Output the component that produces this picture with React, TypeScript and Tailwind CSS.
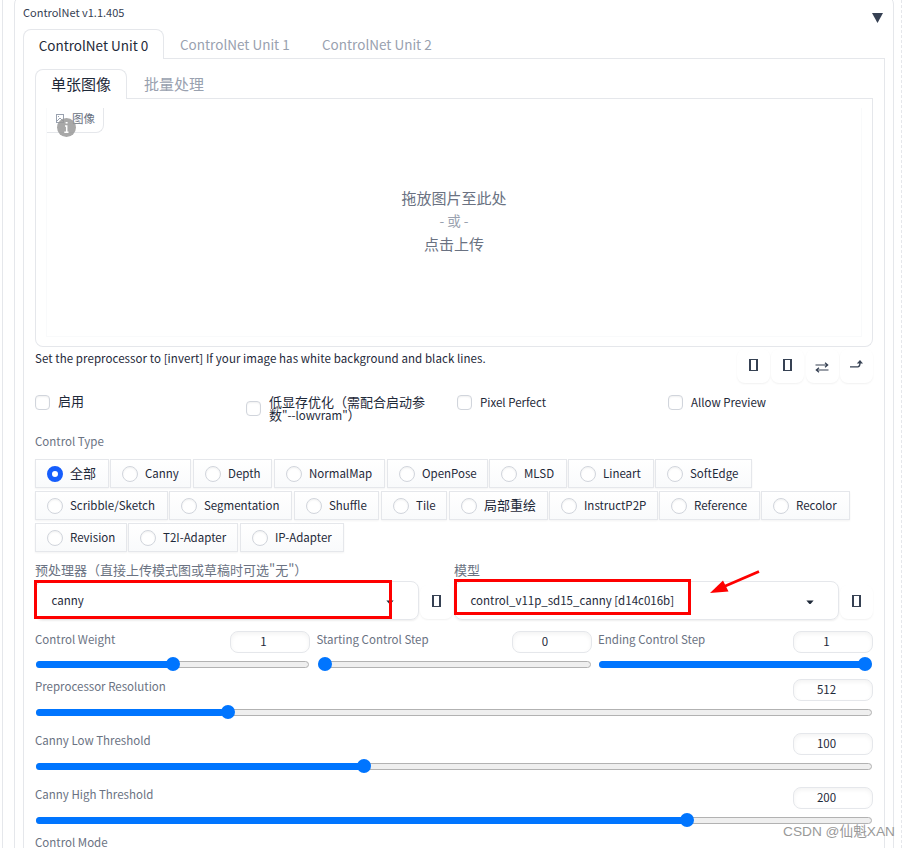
import { useState } from 'react';
import clsx from 'clsx';

const controlTypes = [
  [
    { name: '全部', width: 'w-[74px] mr-px', cjk: true },
    { name: 'Canny', width: 'w-[81px] mr-0.5' },
    { name: 'Depth', width: 'w-[79px] mr-0.5' },
    { name: 'NormalMap', width: 'w-[111px] mr-0.5' },
    { name: 'OpenPose', width: 'w-[101px] mr-px' },
    { name: 'MLSD', width: 'w-[78px] mr-px' },
    { name: 'Lineart', width: 'w-[86px] mr-px' },
    { name: 'SoftEdge', width: 'w-[97px]' },
  ],
  [
    { name: 'Scribble/Sketch', width: 'w-[133px] mr-px' },
    { name: 'Segmentation', width: 'w-[123px] mr-0.5' },
    { name: 'Shuffle', width: 'w-[85px] mr-0.5' },
    { name: 'Tile', width: 'w-[66px] mr-0.5' },
    { name: '局部重绘', width: 'w-[99px] mr-px', cjk: true },
    { name: 'InstructP2P', width: 'w-[109px] mr-px' },
    { name: 'Reference', width: 'w-[101px] mr-px' },
    { name: 'Recolor', width: 'w-[89px]' },
  ],
  [
    { name: 'Revision', width: 'w-[92px] mr-px' },
    { name: 'T2I-Adapter', width: 'w-[110px] mr-0.5' },
    { name: 'IP-Adapter', width: 'w-[104px]' },
  ],
];

const Box = () => <span className="mb-[3px] block h-3 w-[9px] border-x-2 border-y border-gray-700" />;

const ToolButton = ({ children }: { children: React.ReactNode }) => (
  <button className="flex h-[34px] w-[33px] shrink-0 items-center justify-center rounded-lg shadow-[0_1px_2px_rgba(0,0,0,0.06)]">
    {children}
  </button>
);

const CheckBox = ({ label, tall }: { label: React.ReactNode; tall?: boolean }) => (
  <label className="flex w-[211px] shrink-0 items-center">
    <span className="h-[15px] w-[15px] shrink-0 rounded border border-gray-300 bg-white shadow-[inset_0_1px_2px_rgba(0,0,0,0.06)]" />
    <span className={clsx('ml-2 whitespace-nowrap', tall ? 'text-[13px] leading-[13px]' : 'leading-[15px]')}>{label}</span>
  </label>
);

const NumberBox = ({ value }: { value: number }) => (
  <div className="flex h-[22px] w-20 shrink-0 items-center justify-center rounded-lg border border-gray-200 pr-[13px] shadow-[inset_0_2px_4px_rgba(0,0,0,0.05)]">
    {value}
  </div>
);

const Track = ({ percent }: { percent: number }) => (
  <div className="relative mx-px h-[7px] rounded-full border border-[#b2b2b2] bg-[#efefef]">
    <div className="absolute -top-px -left-px h-[7px] rounded-full bg-[#0075ff]" style={{ width: `${percent}%` }} />
    <div
      className="absolute -top-[5px] h-3.5 w-3.5 rounded-full bg-[#0075ff]"
      style={{ left: `calc(${percent} * (100% - 12px) / 100 - 1px)` }}
    />
  </div>
);

const Slider = ({ label, value, percent, short }: { label: string; value: number; percent: number; short?: boolean }) => (
  <div className={short ? 'w-[275px]' : 'h-[54px]'}>
    <div className="flex items-start justify-between">
      <span className="leading-[18px] text-gray-500">{label}</span>
      <div className={short ? 'pt-px' : 'pt-0.5'}><NumberBox value={value} /></div>
    </div>
    <div className={short ? 'pt-2' : 'pt-[7.5px]'}>
      <Track percent={percent} />
    </div>
  </div>
);

const Dropdown = ({ value, children }: { value: string; children?: React.ReactNode }) => (
  <div className="relative flex h-[39px] items-center justify-between rounded-lg border border-gray-200 pl-[15.5px] pr-6 shadow-[0_1px_2px_rgba(0,0,0,0.07)]">
    <span>{value}</span>
    <svg width="8" height="5" viewBox="0 0 8 5" className="mt-[3px] text-gray-800">
      <path d="M0.4 0.5h7.2L5 3.6Q4 4.6 3 3.6Z" fill="currentColor" />
    </svg>
    {children}
  </div>
);

const App = () => {
  const [controlType, setControlType] = useState('全部');

  return (
    <div
      lang="zh-CN"
      className="relative h-[848px] w-[908px] overflow-hidden bg-white font-['Noto_Sans_CJK_SC',sans-serif] text-[11.5px] text-gray-800"
    >
      <div className="ml-0.5 flex h-full w-[900px] border-x border-l-gray-200 border-r-transparent">
        <div className="-mt-1 ml-[11px] h-[870px] w-[880px] shrink-0 rounded-lg border border-gray-200 px-2 pt-1">
          <div className="flex h-7 items-center justify-between pr-0.5 pb-1 text-gray-700">
            <span className="pb-0.5 text-[11px]">ControlNet v1.1.405</span>
            <svg width="11" height="10" viewBox="0 0 11 10" className="mt-2.5 fill-gray-700">
              <path d="M0 0h11L5.5 10z" />
            </svg>
          </div>

          {/* Unit tabs */}
          <div className="flex h-[30px] text-[13.5px]">
            <button className="w-[141px] rounded-t-lg border border-b-0 border-gray-200 pt-px">ControlNet Unit 0</button>
            <div className="flex flex-1 border-b border-gray-200 pl-4 pt-0.5 text-gray-400">
              <button className="w-[142px] text-left">ControlNet Unit 1</button>
              <button>ControlNet Unit 2</button>
            </div>
          </div>

          <div className="h-[800px] border-x border-gray-200 px-[11px] pt-2.5">
            {/* Image source tabs */}
            <div className="flex h-[30px] text-[15px]">
              <button className="w-[92px] rounded-t-lg border border-b-0 border-gray-200">单张图像</button>
              <div className="flex flex-1 border-b border-gray-200 pl-[17px] pt-0.5 text-gray-400">
                <button>批量处理</button>
              </div>
            </div>
            <div className="h-[248px] rounded-b-lg border border-t-0 border-gray-200 px-2.5 pt-[9px]">
              <div className="relative flex h-[229px] flex-col items-center justify-center border border-t-0 border-gray-50 pb-1 text-[15px] leading-[23px] text-gray-500">
                <div className="absolute left-0 top-0 flex h-[25px] w-[57px] items-center rounded-br-lg border-b border-r border-gray-200 pb-[3px] pl-[9px] text-[11.5px]">
                  <svg width="8" height="9" viewBox="0 0 8 9" className="mr-2 fill-none stroke-gray-400">
                    <rect x="0.5" y="0.5" width="7" height="8" />
                    <path d="M1 7l3-3 3 3M2 2.5h1" />
                  </svg>
                  图像
                </div>
                <svg width="19" height="19" viewBox="0 0 19 19" className="absolute left-[9.5px] top-2.5">
                  <circle cx="9.5" cy="9.5" r="9.5" fill="#999" fillOpacity="0.85" />
                  <path d="M8 8h1.7v6M7.3 14.2h4.2M8.6 4.8h2" stroke="#fff" strokeWidth="1.5" fill="none" />
                </svg>
                <span>拖放图片至此处</span>
                <span className="text-[13.5px] text-gray-400">- 或 -</span>
                <span>点击上传</span>
              </div>
            </div>

            <div className="flex h-12 justify-between pt-0.5">
              <span className="leading-[18px] tracking-[0.07px]">Set the preprocessor to [invert] If your image has white background and black lines.</span>
              <div className="flex gap-[1.5px]">
                <ToolButton><Box /></ToolButton>
                <ToolButton><Box /></ToolButton>
                <ToolButton>
                  <svg width="14" height="11" viewBox="0 0 14 11" className="mt-0.5 fill-none stroke-gray-700">
                    <path d="M0.5 3h12M10 0.8L12.7 3 10 5.2M13.5 8H1.5M4 5.8L1.3 8 4 10.2" strokeWidth="1.2" />
                  </svg>
                </ToolButton>
                <ToolButton>
                  <svg width="13" height="8" viewBox="0 0 13 8" className="-mt-1">
                    <path d="M0 6.8h8Q10 6.5 10 3" strokeWidth="1.3" className="fill-none stroke-gray-700" />
                    <path d="M6.8 3.4L10 0l3 3.4z" className="fill-gray-700" />
                  </svg>
                </ToolButton>
              </div>
            </div>

            <div className="flex h-[37px] items-start">
              <CheckBox label={<span className="-mt-1 block text-[13px]">启用</span>} />
              <CheckBox tall label={<>低显存优化（需配合启动参<br />数<span className="text-[11.5px]">"--lowvram"</span>）</>} />
              <CheckBox label="Pixel Perfect" />
              <CheckBox label="Allow Preview" />
            </div>

            <div className="h-[27px] leading-[18px] text-gray-500">Control Type</div>
            <div className="flex h-[101px] flex-col gap-[3px]">
              {controlTypes.map((row, index) => (
                <div key={index} className="flex">
                  {row.map((item) => (
                    <button
                      key={item.name}
                      onClick={() => setControlType(item.name)}
                      className={clsx(
                        'flex h-[29px] shrink-0 items-center whitespace-nowrap border border-gray-200 bg-linear-to-b from-white to-gray-50 pl-[11px] shadow-[0_1px_2px_rgba(0,0,0,0.05)]',
                        item.width
                      )}
                    >
                      <span
                        className={clsx(
                          'mr-[7px] h-4 w-4 shrink-0 rounded-full',
                          controlType === item.name
                            ? 'border-5 border-blue-600 bg-white'
                            : 'border border-gray-300 bg-white shadow-[inset_0_1px_2px_rgba(0,0,0,0.06)]'
                        )}
                      />
                      <span className={item.cjk ? 'pb-0.5 text-[13px]' : ''}>{item.name}</span>
                    </button>
                  ))}
                </div>
              ))}
            </div>

            {/* Preprocessor and model */}
            <div className="flex h-[70px]">
              <div className="w-96">
                <div className="h-[21px] text-[13px] leading-5 text-gray-500">预处理器（直接上传模式图或草稿时可选"无"）</div>
                <Dropdown value="canny">
                  <div className="absolute -left-0.5 -top-0.5 h-[39px] w-[358px] border-3 border-[#fe0000]" />
                </Dropdown>
              </div>
              <div className="mx-px mt-[25px]"><ToolButton><Box /></ToolButton></div>
              <div className="w-[385px]">
                <div className="h-[21px] text-[13px] leading-5 text-gray-500">模型</div>
                <Dropdown value="control_v11p_sd15_canny [d14c016b]">
                  <div className="absolute -left-px -top-[3px] h-9 w-[237px] border-3 border-[#fe0000]" />
                  <svg width="52" height="25" viewBox="0 0 52 25" className="absolute left-[254px] -top-[12px] text-[#fe0000]">
                    <path d="M50 1.5L14 17" stroke="currentColor" strokeWidth="2.8" fill="none" />
                    <path d="M1 23L14 10.5 19.5 21.5z" fill="currentColor" />
                  </svg>
                </Dropdown>
              </div>
              <div className="ml-px mt-[25px]"><ToolButton><Box /></ToolButton></div>
            </div>

            <div className="flex h-[47px] gap-[6.5px]">
              <Slider short label="Control Weight" value={1} percent={50} />
              <Slider short label="Starting Control Step" value={0} percent={0} />
              <Slider short label="Ending Control Step" value={1} percent={100} />
            </div>
            <Slider label="Preprocessor Resolution" value={512} percent={22.5} />
            <Slider label="Canny Low Threshold" value={100} percent={39} />
            <Slider label="Canny High Threshold" value={200} percent={78.4} />
            <div className="-mt-[6px] leading-[18px] text-gray-500">Control Mode</div>
          </div>
        </div>
      </div>
      <div className="absolute right-1.5 top-0 h-full border-r border-dashed border-gray-200" />
      <div className="absolute left-[783px] top-[822px] whitespace-nowrap font-['Liberation_Sans','Noto_Sans_CJK_SC',sans-serif] text-[13.7px] leading-5 text-[#999]">
        CSDN @仙魁XAN
      </div>
    </div>
  );
};

export default App;
